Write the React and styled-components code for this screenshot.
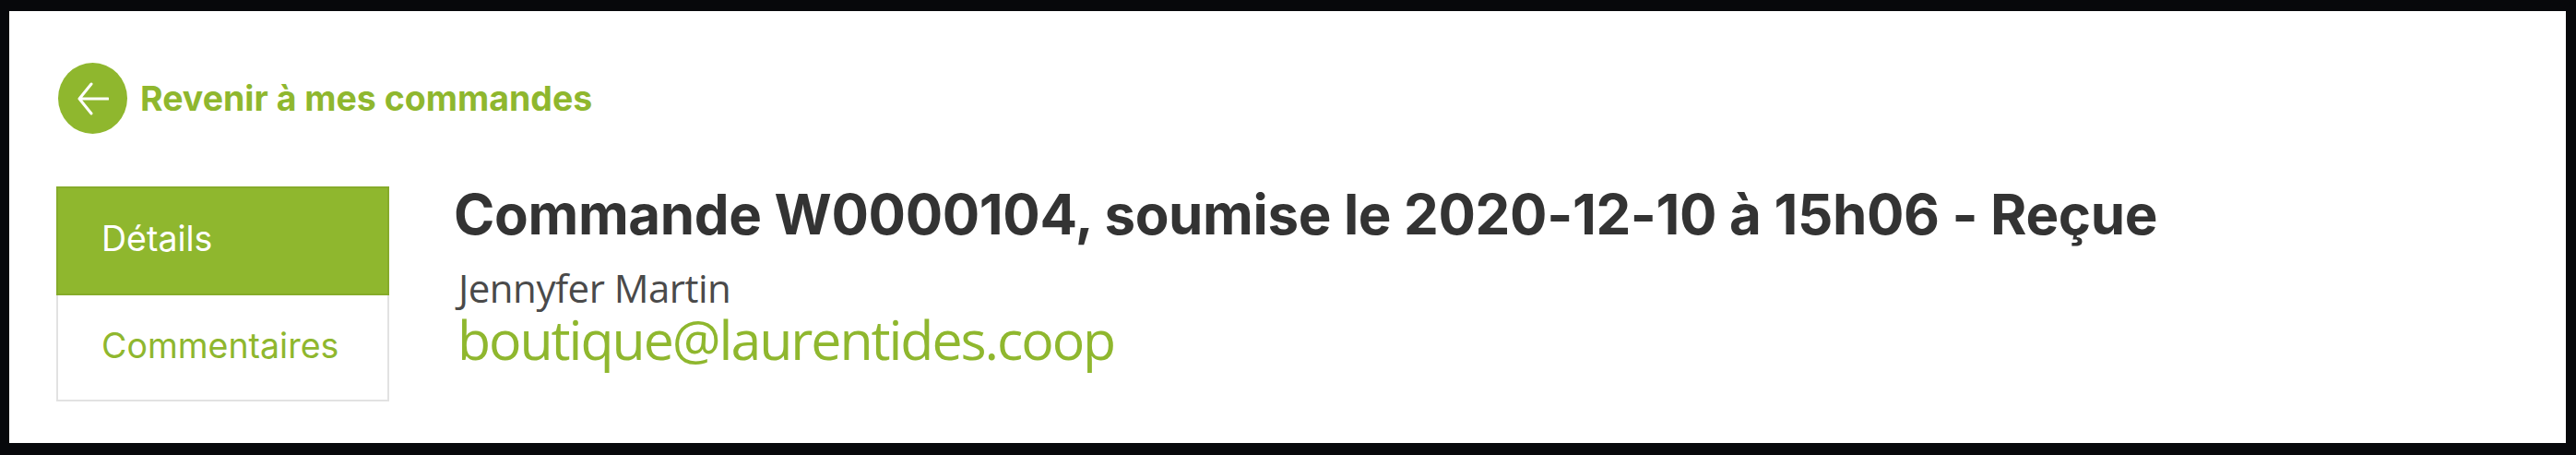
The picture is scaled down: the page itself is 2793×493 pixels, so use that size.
import React from "react";
import styled, { createGlobalStyle } from "styled-components";

const GREEN = "#8fb72e";

const Global = createGlobalStyle`
  html, body { margin: 0; padding: 0; background: #07080b; }
  #root { width: 2793px; height: 493px; }
`;

const Frame = styled.div`
  box-sizing: border-box;
  width: 2793px;
  height: 493px;
  border-style: solid;
  border-color: #07080b;
  border-width: 12px 11px 13px 10px;
  background: #fff;
  padding: 56px 0 0 51px;
  overflow: hidden;
  font-family: "Inter", "Liberation Sans", sans-serif;
`;

const BackLink = styled.a`
  display: flex;
  align-items: center;
  gap: 14px;
  height: 77px;
  padding-left: 2px;
  color: ${GREEN};
  text-decoration: none;
  font-size: 37.5px;
  font-weight: 700;
`;

const BackCircle = styled.span`
  flex: none;
  width: 75px;
  height: 77px;
  border-radius: 50%;
  background: ${GREEN};
  display: flex;
  align-items: center;
  justify-content: center;
`;

const Content = styled.div`
  display: flex;
  margin-top: 57px;
`;

const Tabs = styled.nav`
  flex: none;
  width: 361px;
  display: flex;
  flex-direction: column;
`;

const Tab = styled.a`
  box-sizing: border-box;
  height: ${(p) => (p.$active ? 118 : 115)}px;
  padding-left: 47px;
  display: flex;
  align-items: flex-start;
  padding-top: 33px;
  font-size: 37.5px;
  line-height: 44px;
  font-weight: 400;
  color: ${(p) => (p.$active ? "#fff" : GREEN)};
  background: ${(p) => (p.$active ? GREEN : "#fff")};
  border: 2px solid ${(p) => (p.$active ? "#86ab2a" : "#e2e2e2")};
  border-top-width: ${(p) => (p.$active ? 2 : 0)}px;
`;

const Main = styled.div`
  margin-left: 70px;
  display: flex;
  flex-direction: column;
`;

const Title = styled.h1`
  margin: 0;
  height: 60px;
  font-size: 60px;
  line-height: 60px;
  font-weight: 700;
  color: #333;
  letter-spacing: -0.35px;
  white-space: nowrap;
`;

const Person = styled.div`
  margin-top: 27px;
  padding-left: 5px;
  font-family: "Open Sans", sans-serif;
  font-size: 42px;
  line-height: 46px;
  letter-spacing: -0.5px;
  color: #4a4a4a;
`;

const Email = styled.a`
  display: block;
  padding-left: 4px;
  font-family: "Open Sans", sans-serif;
  font-size: 59px;
  line-height: 64px;
  letter-spacing: -2.05px;
  color: ${GREEN};
  text-decoration: none;
`;

export default function App() {
  return (
    <>
      <Global />
      <Frame>
        <BackLink href="#">
          <BackCircle>
            <svg width="34" height="36" viewBox="0 0 34 36" fill="none" stroke="#fff" strokeWidth="3" strokeLinecap="round" strokeLinejoin="round">
              <path d="M33 18H2M15 2 2 18l13 16" />
            </svg>
          </BackCircle>
          Revenir à mes commandes
        </BackLink>
        <Content>
          <Tabs>
            <Tab $active>Détails</Tab>
            <Tab>Commentaires</Tab>
          </Tabs>
          <Main>
            <Title>Commande W0000104, soumise le 2020-12-10 à 15h06 - Reçue</Title>
            <Person>Jennyfer Martin</Person>
            <Email href="#">boutique@laurentides.coop</Email>
          </Main>
        </Content>
      </Frame>
    </>
  );
}
